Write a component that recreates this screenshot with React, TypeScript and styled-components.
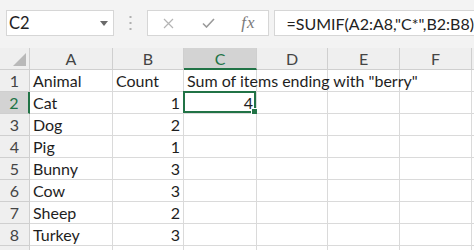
import React from "react";
import styled, { createGlobalStyle, css } from "styled-components";

const GlobalStyle = createGlobalStyle`
  html, body {
    margin: 0;
    padding: 0;
    background: #fff;
    overflow: hidden;
  }

  body {
    font-family: "Lato", "Open Sans", sans-serif;
    color: #222;
  }
`;

const Window = styled.div`
  width: 474px;
  height: 250px;
  overflow: hidden;
  display: flex;
  flex-direction: column;
  background: #fff;
`;

const FormulaBar = styled.div`
  height: 48px;
  flex: none;
  box-sizing: border-box;
  padding: 10px 0 0 6px;
  display: flex;
  align-items: flex-start;
  background: #f3f3f3;
`;

const NameBox = styled.div`
  width: 113px;
  height: 26px;
  box-sizing: border-box;
  padding: 0 5px 0 2px;
  display: flex;
  align-items: center;
  justify-content: space-between;
  background: #fff;
  border: 1px solid #d6d6d6;
  font-size: 16.5px;
  color: #222;
`;

const Grip = styled.div`
  width: 35px;
  height: 26px;
  display: flex;
  align-items: center;
  justify-content: center;
`;

const ActionBox = styled.div`
  width: 122px;
  height: 26px;
  box-sizing: border-box;
  display: grid;
  grid-template-columns: repeat(3, 40px);
  align-items: center;
  justify-items: center;
  background: #fff;
  border: 1px solid #d6d6d6;
`;

const Fx = styled.span`
  font-family: "Liberation Serif", serif;
  font-style: italic;
  font-size: 17px;
  color: #7a7a7a;
  letter-spacing: 1px;
`;

const FormulaInput = styled.div`
  flex: 1;
  height: 26px;
  margin-left: 5px;
  box-sizing: border-box;
  padding-left: 11px;
  display: flex;
  align-items: center;
  background: #fff;
  border: 1px solid #d6d6d6;
  border-right: none;
  font-size: 16px;
  white-space: nowrap;
  color: #222;
`;

const Sheet = styled.div`
  display: grid;
  grid-template-columns: 30px 83px 71px 73px 71px 72px 72px 40px;
  grid-auto-rows: 22px;
`;

const Cell = styled.div<{ $align?: "left" | "right" }>`
  position: relative;
  box-sizing: border-box;
  padding: 0 3px;
  display: flex;
  align-items: center;
  justify-content: ${(p) => (p.$align === "right" ? "flex-end" : "flex-start")};
  border-right: 1px solid #dadada;
  border-bottom: 1px solid #dadada;
  font-size: 16px;
  white-space: nowrap;
  color: #1e1e1e;
`;

const HeaderCell = styled.div<{ $active?: boolean; $side?: "top" | "left" }>`
  box-sizing: border-box;
  display: flex;
  align-items: center;
  justify-content: center;
  background: #efefef;
  border-right: 1px solid #cfcfcf;
  border-bottom: 1px solid #cfcfcf;
  font-size: 16px;
  color: #444;

  ${(p) =>
    p.$active &&
    css`
      background: #d3d3d3;
      color: #217346;
    `}

  ${(p) =>
    p.$active &&
    p.$side === "top" &&
    css`
      border-bottom: 2px solid #217346;
    `}

  ${(p) =>
    p.$active &&
    p.$side === "left" &&
    css`
      border-right: 2px solid #217346;
    `}
`;

const Corner = styled.div`
  box-sizing: border-box;
  background: #efefef;
  border-right: 1px solid #cfcfcf;
  border-bottom: 1px solid #cfcfcf;
  display: flex;
  align-items: flex-end;
  justify-content: flex-end;
  padding: 0 3px 3px 0;
`;

const Selection = styled.div`
  position: absolute;
  top: -1px;
  left: -1px;
  right: 0;
  bottom: 0;
  border: 2px solid #217346;
  pointer-events: none;
`;

const FillHandle = styled.div`
  position: absolute;
  right: -4px;
  bottom: -4px;
  width: 5px;
  height: 5px;
  background: #217346;
  border: 1px solid #fff;
`;

const Value = styled.span`
  position: relative;
  z-index: 1;
`;

const columns = ["A", "B", "C", "D", "E", "F", ""];

// last row is only a sliver at the bottom edge, so no label is visible
const rows: [string, string, string][] = [
  ["1", "Animal", "Count"],
  ["2", "Cat", "1"],
  ["3", "Dog", "2"],
  ["4", "Pig", "1"],
  ["5", "Bunny", "3"],
  ["6", "Cow", "3"],
  ["7", "Sheep", "2"],
  ["8", "Turkey", "3"],
  ["", "", ""],
];

const ActiveCol = "C";
const ActiveRow = 2;

export default function App() {
  return (
    <>
      <GlobalStyle />
      <Window>
        <FormulaBar>
          <NameBox>
            <span>C2</span>
            <svg width="8" height="5" viewBox="0 0 8 5">
              <path d="M0 0h8L4 5z" fill="#6a6a6a" />
            </svg>
          </NameBox>
          <Grip>
            <svg width="3" height="14" viewBox="0 0 3 14">
              <rect x="0.5" y="0" width="2" height="2" fill="#b0b0b0" />
              <rect x="0.5" y="6" width="2" height="2" fill="#b0b0b0" />
              <rect x="0.5" y="12" width="2" height="2" fill="#b0b0b0" />
            </svg>
          </Grip>
          <ActionBox>
            <svg width="11" height="11" viewBox="0 0 11 11">
              <path d="M1 1l9 9M10 1l-9 9" stroke="#b4b4b4" strokeWidth="1.2" />
            </svg>
            <svg width="13" height="10" viewBox="0 0 13 10">
              <path d="M1 5.5l3.5 3.5L12 1" stroke="#9a9a9a" strokeWidth="1.6" fill="none" />
            </svg>
            <Fx>fx</Fx>
          </ActionBox>
          <FormulaInput>=SUMIF(A2:A8,"C*",B2:B8)</FormulaInput>
        </FormulaBar>

        <Sheet>
          <Corner>
            <svg width="13" height="13" viewBox="0 0 13 13">
              <path d="M13 0v13H0z" fill="#b9b9b9" />
            </svg>
          </Corner>
          {columns.map((c, i) => (
            <HeaderCell key={i} $side="top" $active={c === ActiveCol}>
              {c}
            </HeaderCell>
          ))}

          {rows.map(([label, animal, count], r) => {
            const rowNo = r + 1;
            const isNumber = count !== "" && !isNaN(Number(count));
            return (
              <React.Fragment key={rowNo}>
                <HeaderCell $side="left" $active={rowNo === ActiveRow}>
                  {label}
                </HeaderCell>
                <Cell>{animal}</Cell>
                <Cell $align={isNumber ? "right" : "left"}>{count}</Cell>
                {rowNo === 1 ? (
                  <Cell>
                    <Value>Sum of items ending with "berry"</Value>
                  </Cell>
                ) : rowNo === ActiveRow ? (
                  <Cell $align="right">
                    <Value>4</Value>
                    <Selection>
                      <FillHandle />
                    </Selection>
                  </Cell>
                ) : (
                  <Cell />
                )}
                <Cell />
                <Cell />
                <Cell />
                <Cell />
              </React.Fragment>
            );
          })}
        </Sheet>
      </Window>
    </>
  );
}
